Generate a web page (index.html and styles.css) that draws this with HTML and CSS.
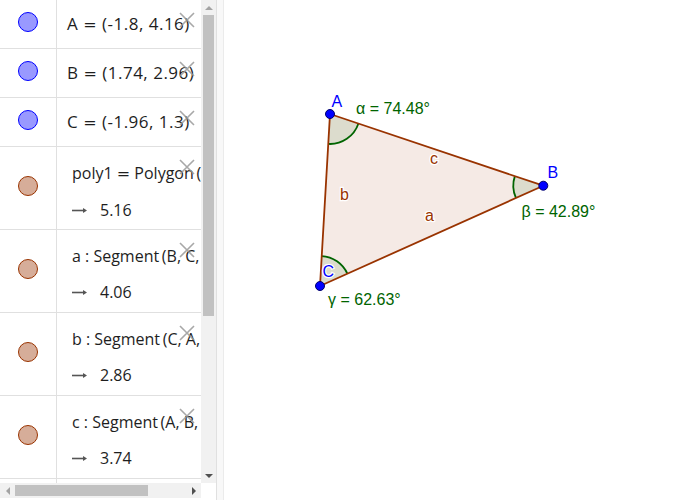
FILE: index.html
```html
<!DOCTYPE html>
<html>
<head>
<meta charset="utf-8">
<link rel="stylesheet" href="styles.css">
</head>
<body>
<div class="app">
  <div class="algebra">
    <div class="list-area">
      <div class="list">
        <div class="row single">
          <div class="marble-col"><span class="marble blue"></span></div>
          <div class="content"><div class="def big">A <span class="eq">=</span> (-1.8, 4.16)</div></div>
          <svg class="del" viewBox="0 0 16 16"><path d="M1 1L15 15M15 1L1 15"/></svg>
        </div>
        <div class="row single">
          <div class="marble-col"><span class="marble blue"></span></div>
          <div class="content"><div class="def big">B <span class="eq">=</span> (1.74, 2.96)</div></div>
          <svg class="del" viewBox="0 0 16 16"><path d="M1 1L15 15M15 1L1 15"/></svg>
        </div>
        <div class="row single">
          <div class="marble-col"><span class="marble blue"></span></div>
          <div class="content"><div class="def big">C <span class="eq">=</span> (-1.96, 1.3)</div></div>
          <svg class="del" viewBox="0 0 16 16"><path d="M1 1L15 15M15 1L1 15"/></svg>
        </div>
        <div class="row double">
          <div class="marble-col"><span class="marble brown"></span></div>
          <div class="content">
            <div class="def">poly1 <span class="eq">=</span> Polygon&#8201;(A, B, C)</div>
            <div class="val"><svg class="arrow" viewBox="0 0 15 7"><path d="M0 3.5H12"/><path class="head" d="M11 1L15 3.5L11 6Z"/></svg><span>5.16</span></div>
          </div>
          <svg class="del" viewBox="0 0 16 16"><path d="M1 1L15 15M15 1L1 15"/></svg>
        </div>
        <div class="row double">
          <div class="marble-col"><span class="marble brown"></span></div>
          <div class="content">
            <div class="def">a : Segment&#8201;(B, C, poly1)</div>
            <div class="val"><svg class="arrow" viewBox="0 0 15 7"><path d="M0 3.5H12"/><path class="head" d="M11 1L15 3.5L11 6Z"/></svg><span>4.06</span></div>
          </div>
          <svg class="del" viewBox="0 0 16 16"><path d="M1 1L15 15M15 1L1 15"/></svg>
        </div>
        <div class="row double">
          <div class="marble-col"><span class="marble brown"></span></div>
          <div class="content">
            <div class="def">b : Segment&#8201;(C, A, poly1)</div>
            <div class="val"><svg class="arrow" viewBox="0 0 15 7"><path d="M0 3.5H12"/><path class="head" d="M11 1L15 3.5L11 6Z"/></svg><span>2.86</span></div>
          </div>
          <svg class="del" viewBox="0 0 16 16"><path d="M1 1L15 15M15 1L1 15"/></svg>
        </div>
        <div class="row double">
          <div class="marble-col"><span class="marble brown"></span></div>
          <div class="content">
            <div class="def">c : Segment&#8201;(A, B, poly1)</div>
            <div class="val"><svg class="arrow" viewBox="0 0 15 7"><path d="M0 3.5H12"/><path class="head" d="M11 1L15 3.5L11 6Z"/></svg><span>3.74</span></div>
          </div>
          <svg class="del" viewBox="0 0 16 16"><path d="M1 1L15 15M15 1L1 15"/></svg>
        </div>
      </div>
      <div class="vscroll">
        <div class="btn"><span class="tri up light"></span></div>
        <div class="vtrack"><div class="vthumb"></div></div>
        <div class="btn"><span class="tri down dark"></span></div>
      </div>
    </div>
    <div class="hscroll-row">
      <div class="hscroll">
        <div class="btn"><span class="tri left light"></span></div>
        <div class="htrack"><div class="hthumb"></div></div>
        <div class="btn"><span class="tri right dark"></span></div>
      </div>
      <div class="corner"></div>
    </div>
  </div>
  <div class="splitter"></div>
  <div class="graphics">
    <svg class="canvas" width="476" height="500" viewBox="224 0 476 500">
      <polygon class="poly" points="330,114 543.3,185.7 320,286"/>
      <path class="angle-fill" d="M330,114 L358.44,123.56 A30,30 0 0 1 328.26,143.95 Z"/>
      <path class="angle-arc" d="M358.44,123.56 A30,30 0 0 1 328.26,143.95"/>
      <path class="angle-fill" d="M543.3,185.7 L515.93,197.99 A30,30 0 0 1 514.86,176.14 Z"/>
      <path class="angle-arc" d="M515.93,197.99 A30,30 0 0 1 514.86,176.14"/>
      <path class="angle-fill" d="M320,286 L321.74,256.06 A30,30 0 0 1 347.37,273.71 Z"/>
      <path class="angle-arc" d="M321.74,256.06 A30,30 0 0 1 347.37,273.71"/>
      <polygon class="poly-edge" points="330,114 543.3,185.7 320,286"/>
      <text class="lbl seg" x="430" y="164">c</text>
      <text class="lbl seg" x="340" y="200">b</text>
      <text class="lbl seg" x="425" y="221">a</text>
      <text class="lbl ang" x="356" y="114">α = 74.48°</text>
      <text class="lbl ang" x="521.5" y="217">β = 42.89°</text>
      <text class="lbl ang" x="328" y="305">γ = 62.63°</text>
      <text class="lbl pt" x="331.5" y="107">A</text>
      <text class="lbl pt" x="547.5" y="178">B</text>
      <text class="lbl pt" x="322.5" y="277">C</text>
      <circle class="point" cx="330" cy="114" r="4.5"/>
      <circle class="point" cx="543.3" cy="185.7" r="4.5"/>
      <circle class="point" cx="320" cy="286" r="4.5"/>
    </svg>
  </div>
</div>
</body>
</html>
```
FILE: styles.css
```css
html, body {
  margin: 0;
  padding: 0;
  background: #ffffff;
}
.app {
  display: flex;
  width: 700px;
  height: 500px;
  overflow: hidden;
  font-family: "Open Sans", "Noto Sans", sans-serif;
  color: #1e1e1e;
}
.algebra {
  width: 216px;
  display: flex;
  flex-direction: column;
  flex: none;
}
.list-area {
  display: flex;
  height: 483px;
}
.list {
  width: 201px;
  height: 483px;
  overflow: hidden;
  background: linear-gradient(to right, transparent 56px, #e0e0e0 56px, #e0e0e0 57px, transparent 57px);
}
.row {
  position: relative;
  display: flex;
  border-bottom: 1px solid #e0e0e0;
  background: #ffffff;
}
.row.single { height: 48px; }
.row.double { height: 82px; }
.marble-col {
  width: 57px;
  flex: none;
  border-right: 1px solid #e0e0e0;
  box-sizing: border-box;
}
.marble {
  display: block;
  width: 18px;
  height: 18px;
  border-radius: 50%;
  margin-left: 18px;
}
.single .marble { margin-top: 12px; }
.double .marble { margin-top: 29px; }
.marble.blue {
  background: #9999ff;
  border: 1px solid #0000ff;
}
.marble.brown {
  background: #d6ad99;
  border: 1px solid #993300;
}
.content {
  white-space: nowrap;
  overflow: visible;
}
.def {
  font-size: 16px;
  line-height: 20px;
}
.def.big {
  font-size: 17px;
  letter-spacing: 0.5px;
  padding-top: 14px;
  padding-left: 10px;
}
.double .def {
  padding-top: 16px;
  padding-left: 15px;
}
.eq {
  font-family: "DejaVu Sans", sans-serif;
  font-size: 16px;
}
.val {
  display: flex;
  align-items: center;
  margin-top: 16px;
  padding-left: 15px;
  font-size: 16px;
  line-height: 20px;
  gap: 13px;
}
.arrow {
  width: 15px;
  height: 7px;
  flex: none;
}
.arrow path {
  stroke: #555555;
  stroke-width: 1.6;
  fill: none;
}
.arrow path.head {
  fill: #555555;
  stroke: none;
}
.del {
  position: absolute;
  left: 179px;
  top: 12px;
  width: 16px;
  height: 16px;
}
.del path {
  stroke: #999999;
  stroke-width: 1.6;
  fill: none;
  opacity: 0.85;
}
.vscroll {
  width: 15px;
  height: 483px;
  background: #f1f1f1;
  display: flex;
  flex-direction: column;
}
.btn {
  width: 15px;
  height: 15px;
  flex: none;
  display: flex;
  align-items: center;
  justify-content: center;
}
.vtrack {
  flex: 1;
}
.vthumb {
  margin: 0 2px;
  height: 301px;
  background: #c1c1c1;
}
.hscroll-row {
  display: flex;
  height: 15px;
}
.hscroll {
  width: 201px;
  display: flex;
  background: #f1f1f1;
}
.htrack {
  flex: 1;
  padding-top: 2px;
}
.hthumb {
  width: 133px;
  height: 11px;
  background: #c1c1c1;
}
.corner {
  width: 15px;
  background: #ffffff;
}
.tri {
  width: 0;
  height: 0;
  display: block;
}
.tri.up {
  border-left: 4px solid transparent;
  border-right: 4px solid transparent;
  border-bottom: 4px solid #a3a3a3;
}
.tri.down {
  border-left: 4px solid transparent;
  border-right: 4px solid transparent;
  border-top: 4px solid #505050;
}
.tri.left {
  border-top: 4px solid transparent;
  border-bottom: 4px solid transparent;
  border-right: 4px solid #a3a3a3;
}
.tri.right {
  border-top: 4px solid transparent;
  border-bottom: 4px solid transparent;
  border-left: 4px solid #505050;
}
.splitter {
  width: 8px;
  flex: none;
  box-sizing: border-box;
  border-left: 1px solid #e0e0e0;
  border-right: 1px solid #ebebeb;
  background: #f8f8f8;
}
.graphics {
  flex: 1;
  background: #ffffff;
}
.canvas {
  display: block;
}
.poly {
  fill: #993300;
  fill-opacity: 0.1;
  stroke: none;
}
.poly-edge {
  fill: none;
  stroke: #993300;
  stroke-width: 1.8;
  stroke-linejoin: round;
}
.angle-fill {
  fill: #006400;
  fill-opacity: 0.1;
  stroke: none;
}
.angle-arc {
  fill: none;
  stroke: #006400;
  stroke-width: 1.8;
}
.point {
  fill: #0000ff;
  stroke: #00006a;
  stroke-width: 1;
}
.lbl {
  font-family: "Liberation Sans", Arial, sans-serif;
  font-size: 16px;
}
.lbl.seg {
  fill: #993300;
  stroke: #ffffff;
  stroke-width: 2.5;
  paint-order: stroke;
}
.lbl.ang { fill: #006400; }
.lbl.pt {
  fill: #0000ff;
  stroke: #ffffff;
  stroke-width: 2.5;
  paint-order: stroke;
}
```
